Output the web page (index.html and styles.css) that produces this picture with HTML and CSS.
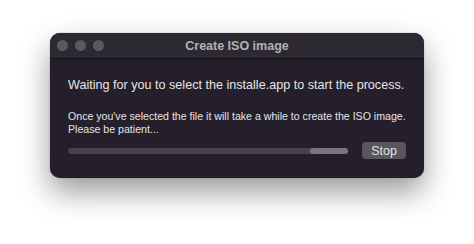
FILE: index.html
```html
<!DOCTYPE html>
<html lang="en">
  <head>
    <meta charset="UTF-8" />
    <meta name="viewport" content="width=device-width, initial-scale=1.0" />
    <title>Create ISO image</title>
    <link rel="stylesheet" href="styles.css">
  </head>
  <body>
    <div class="window">
      <div class="titlebar">
        <div class="lights">
          <span class="light"></span>
          <span class="light"></span>
          <span class="light"></span>
        </div>
        <div class="title">Create ISO image</div>
      </div>
      <div class="content">
        <p class="headline">Waiting for you to select the installe.app to start the process.</p>
        <p class="note">Once you've selected the file it will take a while to create the ISO image.<br />Please be patient...</p>
        <div class="progress-row">
          <div class="progress">
            <div class="progress-fill"></div>
          </div>
          <button class="stop-button">Stop</button>
        </div>
      </div>
    </div>
  </body>
</html>
```

FILE: styles.css
```css
html,
body {
  height: 100%;
}
body {
  margin: 0;
  box-sizing: border-box;
  background-color: #ffffff;
  font-family: "Liberation Sans", Arial, sans-serif;
  padding: 33px 0 0 50px;
}
.window {
  width: 374px;
  height: 145px;
  background-color: #241f2a;
  border-radius: 10px;
  box-shadow: 0 14px 30px rgba(0, 0, 0, 0.4), 0 0 1px rgba(0, 0, 0, 0.6);
  overflow: hidden;
}
.titlebar {
  position: relative;
  height: 25px;
  background-color: #2d2932;
  border-bottom: 1px solid #121015;
  display: flex;
  align-items: center;
  justify-content: center;
}
.lights {
  position: absolute;
  left: 7px;
  top: 7px;
  display: flex;
  gap: 7px;
}
.light {
  width: 11px;
  height: 11px;
  border-radius: 50%;
  background-color: #5b5860;
}
.title {
  font-size: 12.5px;
  font-weight: bold;
  color: #b3b0b6;
}
.content {
  padding: 18px 18px 0 18px;
  color: #e6e4e8;
}
.headline {
  margin: 0;
  font-size: 12.6px;
  line-height: 16px;
  white-space: nowrap;
}
.note {
  margin: 17px 0 0 0;
  font-size: 10.6px;
  line-height: 13px;
  white-space: nowrap;
}
.progress-row {
  margin-top: 6px;
  display: flex;
  align-items: center;
  gap: 14px;
}
.progress {
  flex: 1;
  height: 6px;
  background-color: #46424b;
  border-radius: 3px;
  display: flex;
  justify-content: flex-end;
}
.progress-fill {
  width: 38px;
  height: 6px;
  border-radius: 3px;
  background-color: #7a767e;
}
.stop-button {
  width: 44px;
  height: 17px;
  padding: 0;
  border: none;
  border-radius: 4px;
  background-color: #5a565e;
  color: #e2e0e4;
  font-family: "Liberation Sans", Arial, sans-serif;
  font-size: 12.5px;
}
```
